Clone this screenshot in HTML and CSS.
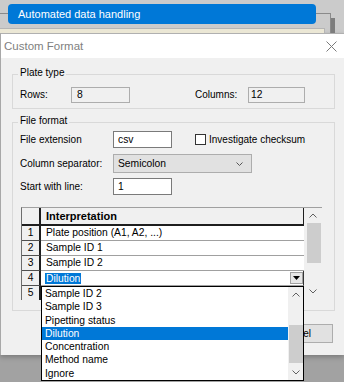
FILE: index.html
```html
<!DOCTYPE html>
<html>
<head>
<meta charset="utf-8">
<link rel="stylesheet" href="styles.css">
</head>
<body>
<div class="screen">
  <div class="bg-top">
    <div class="bg-row">
      <div class="seg-left"></div>
      <div class="pill">Automated data handling</div>
      <div class="seg-right"></div>
      <div class="dark-bar"></div>
    </div>
    <div class="bg-row2">
      <div class="beige"></div>
      <div class="seg-right2"></div>
      <div class="dark-bar2"></div>
    </div>
  </div>
  <div class="dialog">
    <div class="titlebar">
      <span class="title">Custom Format</span>
      <svg class="close" width="11" height="11" viewBox="0 0 11 11"><path d="M0.5 0.5 L10.5 10.5 M10.5 0.5 L0.5 10.5" stroke="#7a7a7a" stroke-width="1" fill="none"/></svg>
    </div>
    <div class="dlg-body">
      <div class="group plate">
        <div class="legend">Plate type</div>
        <div class="plate-row">
          <span class="lbl rows-lbl">Rows:</span>
          <div class="ro-input rows-in">8</div>
          <span class="lbl cols-lbl">Columns:</span>
          <div class="ro-input cols-in">12</div>
        </div>
      </div>
      <div class="group file">
        <div class="legend">File format</div>
        <div class="form-row r1">
          <span class="lbl fl">File extension</span>
          <div class="input">csv</div>
          <span class="check"></span>
          <span class="lbl check-lbl">Investigate checksum</span>
        </div>
        <div class="form-row r2">
          <span class="lbl fl">Column separator:</span>
          <div class="select"><span>Semicolon</span><svg width="7" height="4" viewBox="0 0 7 4"><polyline points="0.5,0.5 3.5,3.5 6.5,0.5" stroke="#555" stroke-width="1" fill="none"/></svg></div>
        </div>
        <div class="form-row r3">
          <span class="lbl fl">Start with line:</span>
          <div class="input">1</div>
        </div>
        <div class="grid-wrap">
          <div class="grid">
            <div class="grid-table">
              <div class="grow hrow"><div class="num h"></div><div class="cell h">Interpretation</div></div>
              <div class="grow"><div class="num">1</div><div class="cell">Plate position (A1, A2, ...)</div></div>
              <div class="grow"><div class="num">2</div><div class="cell">Sample ID 1</div></div>
              <div class="grow"><div class="num">3</div><div class="cell">Sample ID 2</div></div>
              <div class="grow"><div class="num">4</div><div class="cell edit"><span class="sel-text">Dilution</span><span class="dd-btn"><svg width="7" height="4" viewBox="0 0 7 4"><polygon points="0,0 7,0 3.5,4" fill="#000"/></svg></span></div></div>
              <div class="grow"><div class="num">5</div><div class="cell">Sample ID 2</div></div>
            </div>
            <div class="vscroll">
              <div class="arrow"><svg width="8" height="5" viewBox="0 0 8 5"><polyline points="0.5,4.5 4,1 7.5,4.5" stroke="#606060" stroke-width="1" fill="none"/></svg></div>
              <div class="thumb"></div>
              <div class="spacer"></div>
              <div class="arrow down"><svg width="8" height="5" viewBox="0 0 8 5"><polyline points="0.5,0.5 4,4 7.5,0.5" stroke="#606060" stroke-width="1" fill="none"/></svg></div>
            </div>
          </div>
          <div class="droplist">
            <div class="items">
              <div class="item">Sample ID 2</div>
              <div class="item">Sample ID 3</div>
              <div class="item">Pipetting status</div>
              <div class="item active">Dilution</div>
              <div class="item">Concentration</div>
              <div class="item">Method name</div>
              <div class="item">Ignore</div>
            </div>
            <div class="lscroll">
              <div class="larrow"><svg width="8" height="5" viewBox="0 0 8 5"><polyline points="0.5,4.5 4,1 7.5,4.5" stroke="#606060" stroke-width="1" fill="none"/></svg></div>
              <div class="lgap1"></div>
              <div class="lthumb"></div>
              <div class="lgap2"></div>
              <div class="larrow"><svg width="8" height="5" viewBox="0 0 8 5"><polyline points="0.5,0.5 4,4 7.5,0.5" stroke="#606060" stroke-width="1" fill="none"/></svg></div>
            </div>
          </div>
        </div>
      </div>
      <div class="btn-row"><div class="btn">Cancel</div></div>
    </div>
  </div>
</div>
</body>
</html>
```

FILE: styles.css
```css
* { box-sizing: border-box; }
html, body { margin: 0; padding: 0; }
body {
  width: 344px;
  height: 382px;
  overflow: hidden;
  background: #a2a2a2;
  font-family: "Liberation Sans", Arial, sans-serif;
  font-size: 10px;
  color: #000;
}
.screen { width: 344px; height: 382px; }

/* background window */
.bg-top { height: 33px; background: #cbcbcb; display: flex; flex-direction: column; }
.bg-row { height: 28px; display: flex; align-items: flex-start; }
.seg-left { width: 8px; height: 14px; border-bottom: 1px solid #8a8a8a; }
.pill {
  margin-top: 4px;
  width: 308px;
  height: 20px;
  background: #0078d7;
  border-radius: 4px;
  color: #fff;
  font-size: 11px;
  line-height: 20px;
  padding-left: 10px;
}
.seg-right { margin-top: 13px; width: 15px; height: 15px; border-top: 1px solid #8a8a8a; border-right: 1px solid #8a8a8a; }
.dark-bar { margin-top: 18px; width: 4px; height: 10px; background: #7d7d7d; }
.bg-row2 { height: 5px; display: flex; }
.beige { width: 325px; background: #ebe7d5; border-top: 1px solid #b5b5b5; border-right: 1px solid #b5b5b5; }
.seg-right2 { width: 6px; border-right: 1px solid #8a8a8a; }
.dark-bar2 { width: 4px; background: #7d7d7d; }

/* dialog */
.dialog {
  height: 322px;
  border-left: 1px solid #a8a8a8;
  border-top: 1px solid #b0b0b0;
  display: flex;
  flex-direction: column;
  background: #f0f0f0;
  box-shadow: 0 2px 5px rgba(0, 0, 0, 0.25);
}
.titlebar {
  height: 24px;
  flex: none;
  background: #fff;
  display: flex;
  align-items: center;
  justify-content: space-between;
  padding: 0 7px 0 3px;
}
.title { font-size: 11.5px; color: #808080; }
.close { display: block; }

.dlg-body { height: 297px; padding: 16px 9px 0 11px; }

.group { border: 1px solid #d9d9d9; }
.legend {
  width: fit-content;
  margin: -8px 0 0 5px;
  padding: 0 2px;
  background: #f0f0f0;
  line-height: 12px;
}
.plate { padding-bottom: 5px; }
.plate-row { margin-top: 8px; height: 16px; display: flex; align-items: center; padding-left: 7px; }
.lbl { line-height: 12px; flex: none; }
.rows-lbl { width: 51px; }
.cols-lbl { width: 53px; margin-left: 65px; }
.ro-input { height: 16px; border: 1px solid #adadad; background: #f0f0f0; line-height: 14px; font-size: 10.3px; }
.rows-in { width: 59px; padding-left: 5px; }
.cols-in { width: 57px; padding-left: 2px; }

.file { margin-top: 13px; padding-bottom: 10px; }
.form-row { display: flex; align-items: center; padding-left: 7px; }
.fl { width: 93px; }
.r1 { margin-top: 4px; height: 17px; }
.r2 { margin-top: 6px; height: 19px; }
.r3 { margin-top: 5px; height: 17px; }
.input { width: 59px; height: 17px; border: 1px solid #7a7a7a; background: #fff; line-height: 15px; padding-left: 4px; font-size: 10.3px; }
.check { width: 11px; height: 11px; border: 1px solid #333; background: #fff; margin-left: 23px; }
.check-lbl { margin-left: 3px; }
.select {
  width: 139px;
  height: 19px;
  border: 1px solid #adadad;
  background: #e1e1e1;
  display: flex;
  align-items: center;
  justify-content: space-between;
  padding: 0 8px 0 4px;
  font-size: 10.3px;
}
.select svg { display: block; }

/* grid */
.grid-wrap { position: relative; margin: 12px 0 0 8px; width: 301px; height: 93px; font-size: 10.3px; }
.grid {
  width: 301px;
  height: 93px;
  overflow: hidden;
  display: flex;
  border-top: 1px solid #a0a0a0;
  border-left: 1px solid #6d6d6d;
}
.grid-table { width: 282px; flex: none; display: flex; flex-direction: column; }
.grow { display: flex; height: 15px; flex: none; }
.num {
  width: 19px;
  flex: none;
  background: #f0f0f0;
  border-right: 2px solid #1e1e1e;
  border-bottom: 1px solid #505050;
  text-align: center;
  line-height: 14px;
}
.cell {
  flex: 1;
  background: #fff;
  border-bottom: 1px solid #a0a0a0;
  padding-left: 5px;
  line-height: 14px;
  white-space: nowrap;
}
.hrow { height: 18px; }
.num.h { border-bottom: 2px solid #1e1e1e; }
.cell.h {
  background: #f0f0f0;
  border-bottom: 2px solid #1e1e1e;
  border-right: 1px solid #1e1e1e;
  font-weight: bold;
  font-size: 11px;
  line-height: 16px;
}
.cell.edit {
  display: flex;
  align-items: center;
  justify-content: space-between;
  padding-left: 4px;
  border-right: 1px solid #333;
}
.sel-text { background: #0078d7; color: #fff; padding: 0 1px; line-height: 11px; }
.dd-btn {
  width: 13px;
  height: 12px;
  background: #e6e6e6;
  border: 1px solid #a0a0a0;
  display: flex;
  align-items: center;
  justify-content: center;
}
.dd-btn svg { display: block; }

.vscroll { width: 18px; flex: none; background: #f0f0f0; display: flex; flex-direction: column; align-items: center; }
.arrow { height: 15px; flex: none; display: flex; align-items: center; justify-content: center; }
.arrow.down { height: 17px; }
.thumb { width: 14px; height: 40px; flex: none; background: #cdcdcd; margin-left: 1px; }
.spacer { flex: 1; }

/* drop-down list */
.droplist {
  position: absolute;
  left: 20px;
  top: 79px;
  width: 263px;
  height: 95px;
  border: 1px solid #000;
  background: #fff;
  display: flex;
  z-index: 5;
}
.items { flex: 1; }
.item { height: 13.3px; line-height: 13.3px; padding-left: 3px; white-space: nowrap; }
.item.active { background: #0078d7; color: #fff; }
.lscroll { width: 15px; flex: none; background: #f0f0f0; display: flex; flex-direction: column; align-items: center; }
.larrow { height: 15px; flex: none; display: flex; align-items: center; justify-content: center; }
.lgap1 { height: 23px; flex: none; }
.lthumb { width: 14px; height: 38px; flex: none; background: #cdcdcd; }
.lgap2 { height: 2px; flex: none; }

/* buttons */
.btn-row { margin-top: 13px; display: flex; justify-content: flex-end; padding-right: 2px; }
.btn {
  width: 75px;
  height: 19px;
  border: 1px solid #adadad;
  background: #e1e1e1;
  text-align: center;
  line-height: 17px;
}
```
